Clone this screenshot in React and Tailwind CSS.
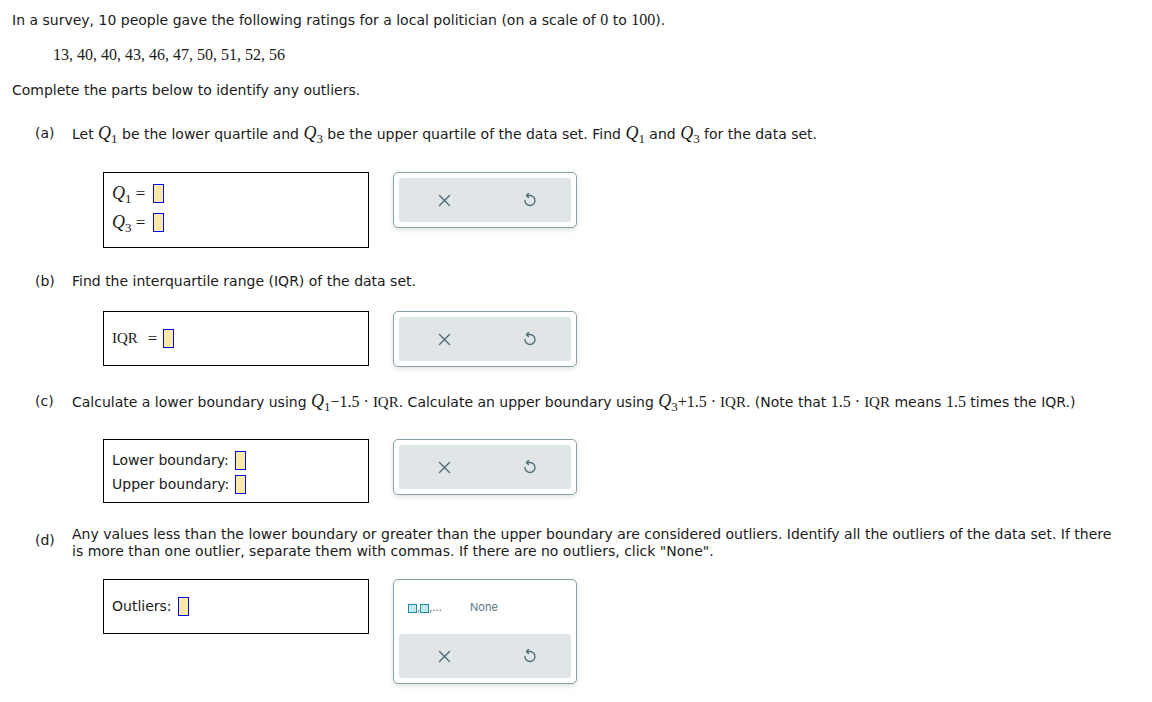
import React from 'react';

const sans = { fontFamily: 'Verdana, "DejaVu Sans", sans-serif' };

function Blank() {
  return <span className="inline-block w-[11px] h-[19px] bg-[#fde8a8] border border-[#0000ff] align-middle" />;
}

function Q({ n }) {
  return (
    <span className="font-['Liberation_Serif',serif] text-[18px] whitespace-nowrap">
      <span className="italic">Q</span>
      <span className="text-[13px] relative top-[4px]">{n}</span>
    </span>
  );
}

function XIcon() {
  return (
    <svg width="13" height="13" viewBox="0 0 13 13" fill="none" stroke="#4e6a74" strokeWidth="1.4" strokeLinecap="round">
      <path d="M1.5 1.5 L11.5 11.5 M11.5 1.5 L1.5 11.5" />
    </svg>
  );
}

function UndoIcon() {
  return (
    <svg width="14" height="16" viewBox="0 0 14 16" fill="none" stroke="#4e6a74" strokeWidth="1.3" strokeLinecap="round" strokeLinejoin="round">
      <path d="M5.5 1.5 L3.5 3.5 L5.5 5.5" />
      <path d="M3.5 3.5 H7 A5 5 0 1 1 2 8.5" />
    </svg>
  );
}

function Panel({ none }) {
  return (
    <div className="w-[184px] rounded-[5px] border border-[#8ba0a8] bg-white shadow-[0_2px_5px_rgba(0,0,0,0.12)] p-[5px]">
      {none && (
        <div className="flex items-center h-[49px] pb-[5px] text-[11px] text-[#5a7580]" style={{ fontFamily: 'Inter, sans-serif' }}>
          <span className="flex items-end ml-[9px] w-[62px]">
            <span className="inline-block w-[9px] h-[9px] border-[1.5px] border-[#1a8fa8] bg-[#c4e8ee]" />
            <span className="leading-none">,</span>
            <span className="inline-block w-[9px] h-[9px] border-[1.5px] border-[#1a8fa8] bg-[#c4e8ee]" />
            <span className="leading-none">,...</span>
          </span>
          <span>None</span>
        </div>
      )}
      <div className="h-[44px] rounded-[3px] bg-[#e0e6e8] flex items-center">
        <div className="w-1/2 flex justify-center pl-[4px]"><XIcon /></div>
        <div className="w-1/2 flex justify-center pl-[4px]"><UndoIcon /></div>
      </div>
    </div>
  );
}

function Part({ label, children, top }) {
  return (
    <div className="flex pl-[35px]">
      <span className={`w-[37px] shrink-0 ${top || ''}`}>{label}</span>
      <div className="flex-1 pr-[30px]">{children}</div>
    </div>
  );
}

function AnswerRow({ boxClass, children, none }) {
  return (
    <div className="flex items-start gap-[24px] pl-[103px]">
      <div className={`w-[266px] border border-black bg-white px-[8px] ${boxClass}`}>{children}</div>
      <Panel none={none} />
    </div>
  );
}

export default function App() {
  return (
    <div className="w-[1152px] h-[702px] bg-white text-[14px] text-[#1a1a1a] overflow-hidden" style={sans}>
      <div className="pl-[12px] pt-[10px] leading-[20px]">
        In a survey, 10 people gave the following ratings for a local politician (on a scale of{' '}
        <span className="font-['Liberation_Serif',serif] text-[16px]">0</span> to{' '}
        <span className="font-['Liberation_Serif',serif] text-[16px]">100</span>).
      </div>
      <div className="pl-[53px] mt-[14px] font-['Liberation_Serif',serif] text-[16px] leading-[22px]">
        13, 40, 40, 43, 46, 47, 50, 51, 52, 56
      </div>
      <div className="pl-[12px] mt-[14px] leading-[20px]">Complete the parts below to identify any outliers.</div>

      <div className="mt-[23px]">
        <Part label="(a)">
          <div className="leading-[20px]">
            Let <Q n="1" /> be the lower quartile and <Q n="3" /> be the upper quartile of the data set. Find <Q n="1" /> and <Q n="3" /> for the data set.
          </div>
        </Part>
      </div>
      <div className="mt-[27px]">
        <AnswerRow boxClass="h-[76px] pt-[6px]">
          <div className="flex items-center gap-[8px] h-[29px]">
            <span className="font-['Liberation_Serif',serif] text-[17px]"><Q n="1" /> =</span>
            <Blank />
          </div>
          <div className="flex items-center gap-[8px] h-[29px]">
            <span className="font-['Liberation_Serif',serif] text-[17px]"><Q n="3" /> =</span>
            <Blank />
          </div>
        </AnswerRow>
      </div>

      <div className="mt-[23px]">
        <Part label="(b)">
          <div className="leading-[20px]">Find the interquartile range (IQR) of the data set.</div>
        </Part>
      </div>
      <div className="mt-[19px]">
        <AnswerRow boxClass="h-[55px] flex items-center">
          <span className="font-['Liberation_Serif',serif] text-[15px]">IQR</span>
          <span className="font-['Liberation_Serif',serif] text-[17px] ml-[10px] mr-[6px]">=</span>
          <Blank />
        </AnswerRow>
      </div>

      <div className="mt-[24px]">
        <Part label="(c)">
          <div className="leading-[20px]">
            Calculate a lower boundary using <Q n="1" /><span className="font-['Liberation_Serif',serif] text-[16px]">−1.5 · </span><span className="font-['Liberation_Serif',serif] text-[15px]">IQR</span>. Calculate an upper boundary using <Q n="3" /><span className="font-['Liberation_Serif',serif] text-[16px]">+1.5 · </span><span className="font-['Liberation_Serif',serif] text-[15px]">IQR</span>. (Note that{' '}
            <span className="font-['Liberation_Serif',serif] text-[16px]">1.5 · </span><span className="font-['Liberation_Serif',serif] text-[15px]">IQR</span> means{' '}
            <span className="font-['Liberation_Serif',serif] text-[16px]">1.5</span> times the IQR.)
          </div>
        </Part>
      </div>
      <div className="mt-[26px]">
        <AnswerRow boxClass="h-[64px] pt-[8px]">
          <div className="flex items-center gap-[6px] h-[24px]">
            <span>Lower boundary:</span>
            <Blank />
          </div>
          <div className="flex items-center gap-[6px] h-[24px]">
            <span>Upper boundary:</span>
            <Blank />
          </div>
        </AnswerRow>
      </div>

      <div className="mt-[23px]">
        <Part label="(d)" top="pt-[4px]">
          <div className="leading-[17px]">
            Any values less than the lower boundary or greater than the upper boundary are considered outliers. Identify all the outliers of the data set. If there is more than one outlier, separate them with commas. If there are no outliers, click "None".
          </div>
        </Part>
      </div>
      <div className="mt-[19px]">
        <AnswerRow boxClass="h-[55px] flex items-center" none>
          <span className="mr-[6px]">Outliers:</span>
          <Blank />
        </AnswerRow>
      </div>
    </div>
  );
}
